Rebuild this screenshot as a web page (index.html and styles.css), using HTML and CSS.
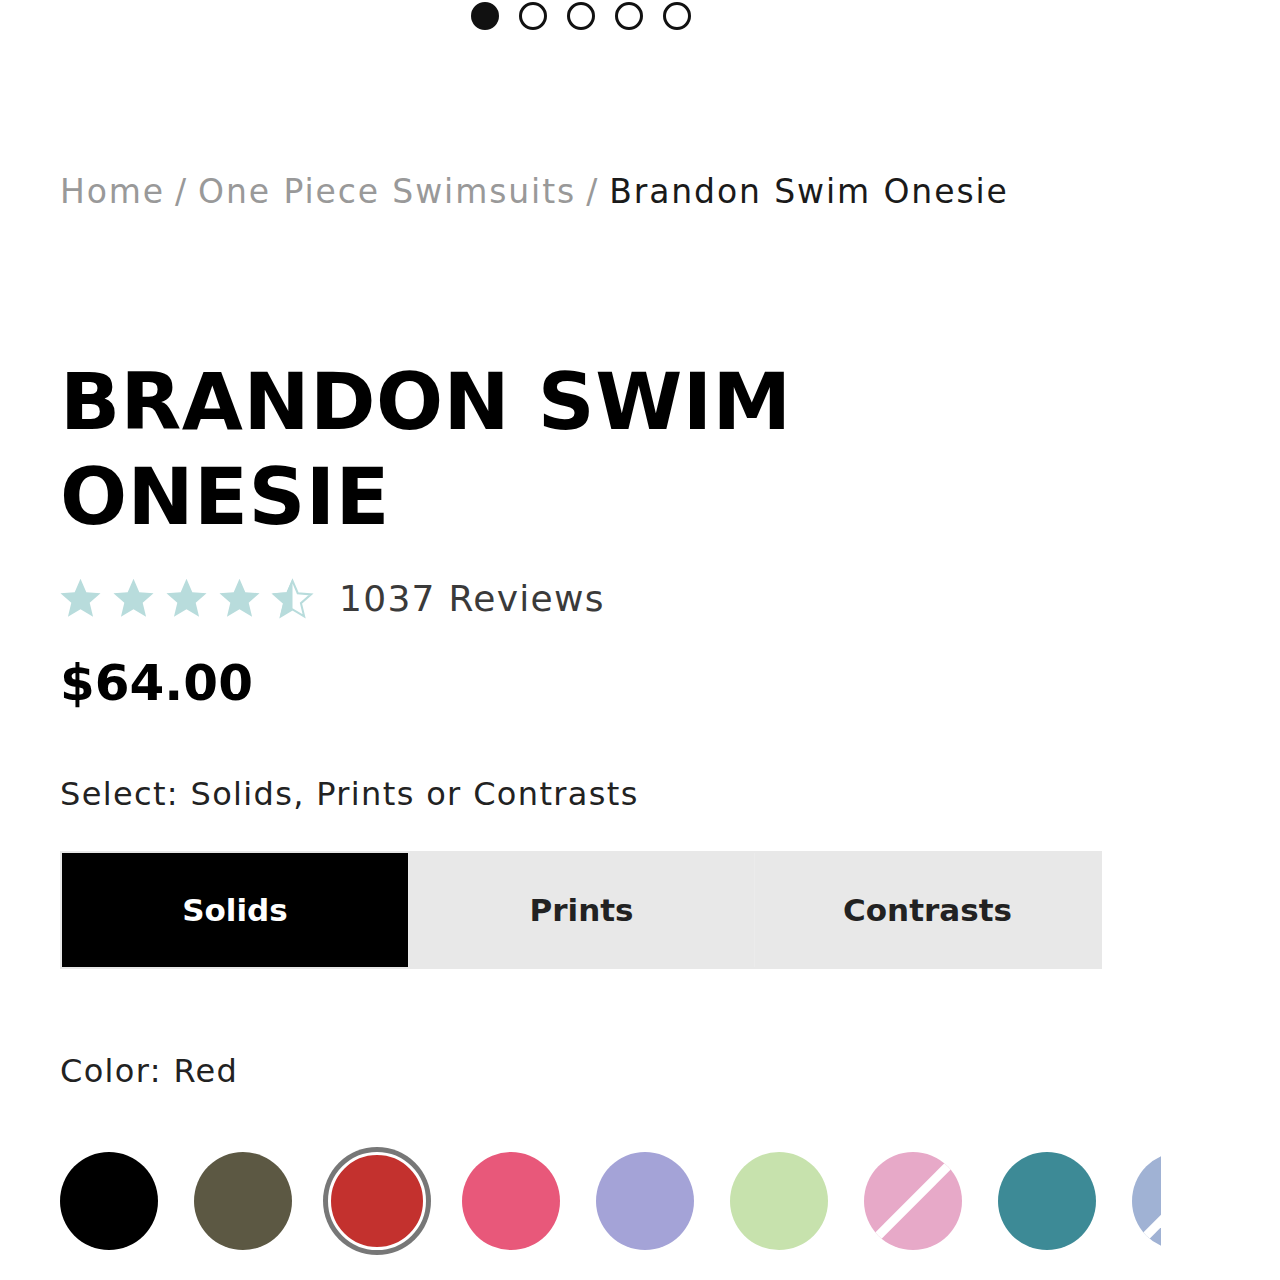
FILE: index.html
```html
<!DOCTYPE html>
<html lang="en">
<head>
<meta charset="utf-8">
<title>Brandon Swim Onesie</title>
<link rel="stylesheet" href="styles.css">
</head>
<body>
<div class="page">
  <div class="dots">
    <span class="dot active"></span>
    <span class="dot"></span>
    <span class="dot"></span>
    <span class="dot"></span>
    <span class="dot"></span>
  </div>

  <nav class="crumbs">
    <a class="crumb" href="#">Home</a><span class="sep">/</span><a class="crumb" href="#">One Piece Swimsuits</a><span class="sep">/</span><span class="current">Brandon Swim Onesie</span>
  </nav>

  <h1 class="title">BRANDON SWIM<br>ONESIE</h1>

  <div class="rating">
    <div class="stars">
      <svg class="star" viewBox="0 0 24 24"><path d="M12 1.5l3.1 7.1 7.6.6-5.8 5 1.8 7.5L12 17.7l-6.7 4 1.8-7.5-5.8-5 7.6-.6z" fill="#b8dcdc"/></svg>
      <svg class="star" viewBox="0 0 24 24"><path d="M12 1.5l3.1 7.1 7.6.6-5.8 5 1.8 7.5L12 17.7l-6.7 4 1.8-7.5-5.8-5 7.6-.6z" fill="#b8dcdc"/></svg>
      <svg class="star" viewBox="0 0 24 24"><path d="M12 1.5l3.1 7.1 7.6.6-5.8 5 1.8 7.5L12 17.7l-6.7 4 1.8-7.5-5.8-5 7.6-.6z" fill="#b8dcdc"/></svg>
      <svg class="star" viewBox="0 0 24 24"><path d="M12 1.5l3.1 7.1 7.6.6-5.8 5 1.8 7.5L12 17.7l-6.7 4 1.8-7.5-5.8-5 7.6-.6z" fill="#b8dcdc"/></svg>
      <svg class="star" viewBox="0 0 24 24"><path d="M12 2.6l2.8 6.6 7.1.6-5.4 4.7 1.7 7L12 17.8l-6.2 3.7 1.7-7-5.4-4.7 7.1-.6z" fill="none" stroke="#b8dcdc" stroke-width="1.1" stroke-linejoin="miter"/><path d="M12 1.5v16.2l-6.7 4 1.8-7.5-5.8-5 7.6-.6z" fill="#b8dcdc"/></svg>
    </div>
    <span class="reviews">1037 Reviews</span>
  </div>

  <div class="price">$64.00</div>

  <div class="label">Select: Solids, Prints or Contrasts</div>

  <div class="tabs">
    <button class="tab active">Solids</button>
    <button class="tab">Prints</button>
    <button class="tab">Contrasts</button>
  </div>

  <div class="label color-label">Color: Red</div>

  <div class="swatches">
    <span class="swatch c-black"></span>
    <span class="swatch c-olive"></span>
    <span class="swatch c-red selected"></span>
    <span class="swatch c-pink"></span>
    <span class="swatch c-lavender"></span>
    <span class="swatch c-green"></span>
    <span class="swatch c-rose soldout"></span>
    <span class="swatch c-teal"></span>
    <span class="swatch c-blue soldout"></span>
  </div>
</div>
</body>
</html>
```
FILE: styles.css
```css
* { box-sizing: border-box; }
html, body { margin: 0; padding: 0; background: #fff; }
body {
  font-family: "DejaVu Sans", "Noto Sans", sans-serif;
  color: #111;
}
.page {
  display: flex;
  flex-direction: column;
  align-items: flex-start;
  padding-left: 60px;
}
.dots {
  align-self: stretch;
  display: flex;
  justify-content: center;
  gap: 20px;
  margin-top: 2px;
  margin-left: -60px;
  padding-right: 118px;
}
.dot {
  width: 28px;
  height: 28px;
  border-radius: 50%;
  border: 3px solid #111;
  background: #fff;
}
.dot.active { background: #111; }

.crumbs {
  margin-top: 142px;
  font-size: 33px;
  line-height: 40px;
  font-weight: 400;
  letter-spacing: 1.9px;
  white-space: nowrap;
}
.crumb { color: #999; text-decoration: none; }
.sep { color: #999; margin: 0 10px; }
.current { color: #1a1a1a; }

.title {
  margin: 143px 0 0;
  font-size: 79px;
  line-height: 95px;
  font-weight: 700;
  color: #000;
  letter-spacing: 0.4px;
}

.rating {
  margin-top: 31px;
  display: flex;
  align-items: center;
  height: 44px;
}
.stars { display: flex; gap: 8px; margin-left: -2px; }
.star { width: 45px; height: 45px; display: block; }
.reviews {
  margin-left: 24px;
  font-size: 36px;
  font-weight: 400;
  letter-spacing: 1.3px;
  color: #3a3a3a;
}

.price {
  margin-top: 33px;
  font-size: 50px;
  line-height: 60px;
  font-weight: 700;
  color: #000;
}

.label {
  margin-top: 61px;
  font-size: 32px;
  line-height: 40px;
  letter-spacing: 1.35px;
  color: #222;
}

.tabs {
  margin-top: 37px;
  width: 1042px;
  height: 118px;
  display: grid;
  grid-template-columns: repeat(3, 1fr);
  padding: 2px;
  background: #e8e8e8;
}
.tab {
  border: 0;
  background: #e8e8e8;
  font-family: inherit;
  font-size: 31px;
  font-weight: 700;
  color: #222;
}
.tab + .tab { border-left: 1px solid #ebebeb; }
.tab.active { background: #000; color: #fff; }

.color-label { margin-top: 82px; }

.swatches {
  margin-top: 55px;
  width: 1101px;
  display: flex;
  gap: 36px;
  overflow: hidden;
  padding: 6px 0 6px 0;
}
.swatch {
  flex: 0 0 98px;
  width: 98px;
  height: 98px;
  border-radius: 50%;
  position: relative;
  overflow: hidden;
}
.swatch.selected {
  border: 3px solid #fff;
  box-shadow: 0 0 0 5px #777;
}
.swatch.soldout::after {
  content: "";
  position: absolute;
  left: 50%;
  top: 50%;
  width: 130px;
  height: 9px;
  background: #fff;
  transform: translate(-50%, -50%) rotate(-45deg);
}
.c-black { background: #000; }
.c-olive { background: #5c5843; }
.c-red { background: #c3312e; }
.c-pink { background: #e8587a; }
.c-lavender { background: #a4a3d7; }
.c-green { background: #c7e2ad; }
.c-rose { background: #e7a9c8; }
.c-teal { background: #3d8a96; }
.c-blue { background: #a0b2d4; }
```
